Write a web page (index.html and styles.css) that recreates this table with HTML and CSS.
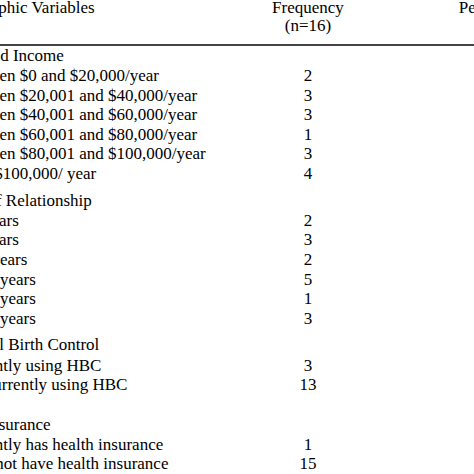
FILE: index.html
```html
<!DOCTYPE html>
<html>
<head>
<meta charset="utf-8">
<link rel="stylesheet" href="styles.css">
</head>
<body>
<div class="viewport">
  <div class="table">
    <div class="row head">
      <div class="c1">Demographic Variables</div>
      <div class="c2">Frequency<br>(n=16)</div>
      <div class="c3">Percentage<br>(%)</div>
    </div>

    <div class="group">
      <div class="row ghead"><div class="c1">Household Income</div></div>
      <div class="row item"><div class="c1">Between $0 and $20,000/year</div><div class="c2">2</div><div class="c3">12.5</div></div>
      <div class="row item"><div class="c1">Between $20,001 and $40,000/year</div><div class="c2">3</div><div class="c3">18.8</div></div>
      <div class="row item"><div class="c1">Between $40,001 and $60,000/year</div><div class="c2">3</div><div class="c3">18.8</div></div>
      <div class="row item"><div class="c1">Between $60,001 and $80,000/year</div><div class="c2">1</div><div class="c3">6.3</div></div>
      <div class="row item"><div class="c1">Between $80,001 and $100,000/year</div><div class="c2">3</div><div class="c3">18.8</div></div>
      <div class="row item"><div class="c1">Over $100,000/ year</div><div class="c2">4</div><div class="c3">25.0</div></div>
    </div>

    <div class="group">
      <div class="row ghead"><div class="c1">Length of Relationship</div></div>
      <div class="row item"><div class="c1">1-2 years</div><div class="c2">2</div><div class="c3">12.5</div></div>
      <div class="row item"><div class="c1">2-3 years</div><div class="c2">3</div><div class="c3">18.8</div></div>
      <div class="row item"><div class="c1">3 - 5 years</div><div class="c2">2</div><div class="c3">12.5</div></div>
      <div class="row item"><div class="c1">5 - 10 years</div><div class="c2">5</div><div class="c3">31.3</div></div>
      <div class="row item"><div class="c1">10-15 years</div><div class="c2">1</div><div class="c3">6.3</div></div>
      <div class="row item"><div class="c1">15-20 years</div><div class="c2">3</div><div class="c3">18.8</div></div>
    </div>

    <div class="group">
      <div class="row ghead"><div class="c1">Hormonal Birth Control</div></div>
      <div class="row item"><div class="c1">Currently using HBC</div><div class="c2">3</div><div class="c3">18.8</div></div>
      <div class="row item"><div class="c1">Not currently using HBC</div><div class="c2">13</div><div class="c3">81.3</div></div>
    </div>

    <div class="group spaced">
      <div class="row ghead"><div class="c1">Health Insurance</div></div>
      <div class="row item"><div class="c1">Currently has health insurance</div><div class="c2">1</div><div class="c3">6.3</div></div>
      <div class="row item"><div class="c1">Does not have health insurance</div><div class="c2">15</div><div class="c3">93.8</div></div>
    </div>
  </div>
</div>
</body>
</html>
```

FILE: styles.css
```css
html, body {
  margin: 0;
  padding: 0;
  background: #ffffff;
}

.viewport {
  width: 474px;
  height: 474px;
  overflow: hidden;
}

.table {
  width: 655px;
  margin-left: -65px;
  margin-top: -1px;
  font-family: "Liberation Serif", "Times New Roman", serif;
  font-size: 17px;
  color: #000000;
}

.row {
  display: grid;
  grid-template-columns: 279px 188px 188px;
  white-space: nowrap;
}

.c2, .c3 {
  text-align: center;
}

.head {
  line-height: 18.4px;
  padding-bottom: 8px;
  border-bottom: 2px solid #444444;
}

.ghead,
.item {
  line-height: 19.6px;
}

.ghead {
  margin-bottom: 0.6px;
}

.item .c1 {
  padding-left: 21px;
}

.group + .group {
  margin-top: 7px;
}

.group.spaced {
  margin-top: 20px;
}
```
